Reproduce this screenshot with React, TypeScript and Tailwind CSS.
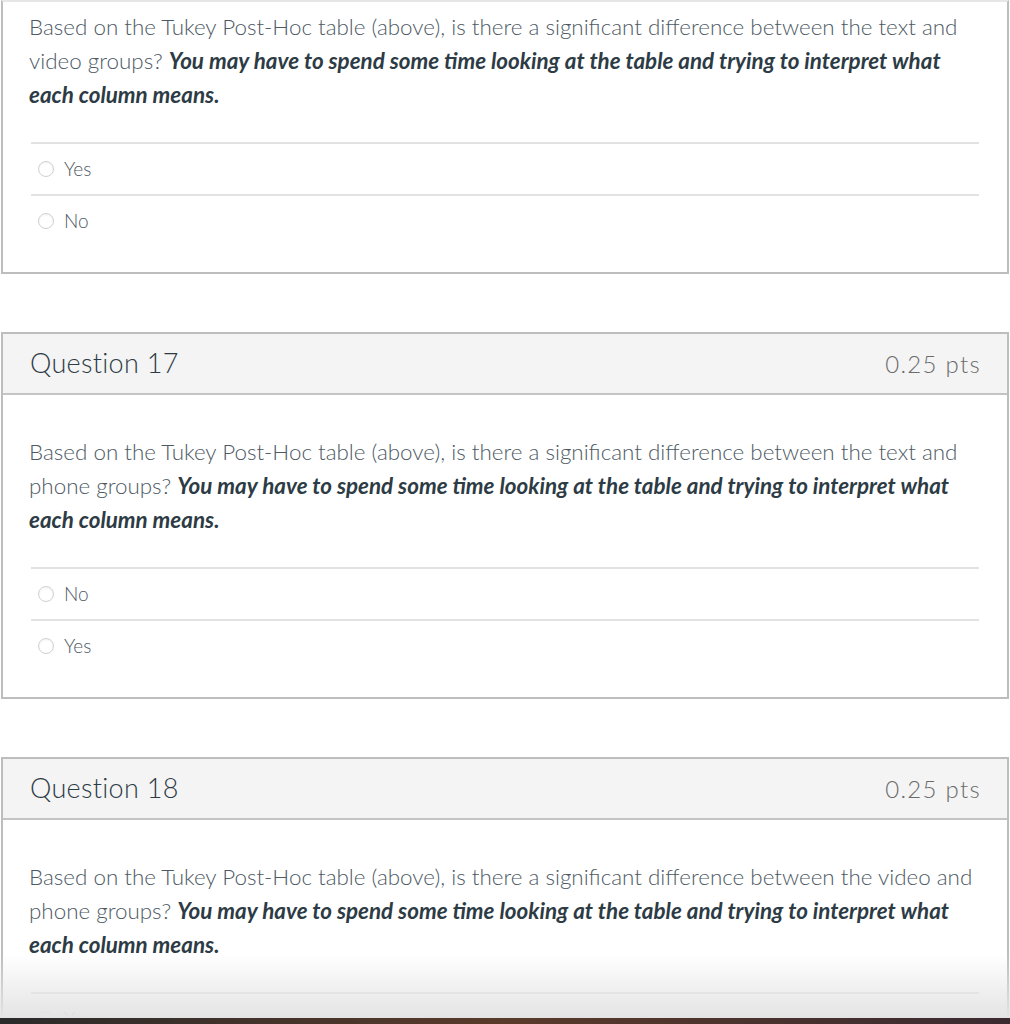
const PROMPT =
  "You may have to spend some time looking at the table and trying to interpret what each column means.";

type Question = {
  number?: number;
  pair: string;
  answers: string[];
};

const QUESTIONS: Question[] = [
  { pair: "text and video", answers: ["Yes", "No"] },
  { number: 17, pair: "text and phone", answers: ["No", "Yes"] },
  { number: 18, pair: "video and phone", answers: ["Yes", "No"] },
];

function Radio() {
  return (
    <span className="h-[16px] w-[16px] shrink-0 rounded-full border border-[#d0d0d0] bg-white shadow-[inset_0_1px_2px_rgba(0,0,0,0.06)]" />
  );
}

function QuestionCard({ q, clipped }: { q: Question; clipped?: boolean }) {
  return (
    <div
      className={[
        "ml-[1px] w-[1008px] border-2 border-[#bdbdbd] bg-white",
        clipped ? "border-t-[#e6e6e6]" : "",
      ].join(" ")}
    >
      {q.number !== undefined && (
        <div className="flex h-[61px] items-center justify-between border-b-2 border-[#c4c4c4] bg-[#f4f4f4] pl-[27px] pr-[26px]">
          <span className="text-[27px] font-light tracking-[0.3px] text-[#2d3b45]">Question {q.number}</span>
          <span className="text-[24px] font-light tracking-[1.3px] text-[#6b6b6b]">0.25 pts</span>
        </div>
      )}
      <div className={clipped ? "pt-[8px]" : "pt-[40px]"}>
        <p className="pl-[26px] pr-[26px] text-[22.4px] leading-[34px] font-light text-[#4d5963]">
          Based on the Tukey Post-Hoc table (above), is there a significant difference between the {q.pair}{" "}
          groups? <strong className="font-bold italic text-[#2d3b45]">{PROMPT}</strong>
        </p>
        <ul className="mt-[30px] mb-[26px] px-[28px]">
          {q.answers.map((a) => (
            <li
              key={a}
              className="flex h-[52px] items-center gap-[10px] border-t-2 border-[#e2e2e2] pl-[7px]"
            >
              <Radio />
              <span className="text-[19px] font-light text-[#4d5963]">{a}</span>
            </li>
          ))}
        </ul>
      </div>
    </div>
  );
}

export default function App() {
  return (
    <div className="relative h-[1024px] overflow-hidden bg-white font-['Lato',sans-serif]">
      <div className="flex flex-col gap-[58px]">
        {QUESTIONS.map((q, i) => (
          <QuestionCard key={i} q={q} clipped={i === 0} />
        ))}
      </div>
      {/* fade at the bottom of the viewport */}
      <div className="pointer-events-none absolute inset-x-0 bottom-[6px] h-[64px] bg-gradient-to-b from-white/0 to-[#e4e4e4]" />
      {/* desktop strip */}
      <div className="absolute inset-x-0 bottom-0 h-[6px] bg-gradient-to-r from-[#2a2a2a] via-[#5a3a2a] to-[#3a2a30]" />
    </div>
  );
}
